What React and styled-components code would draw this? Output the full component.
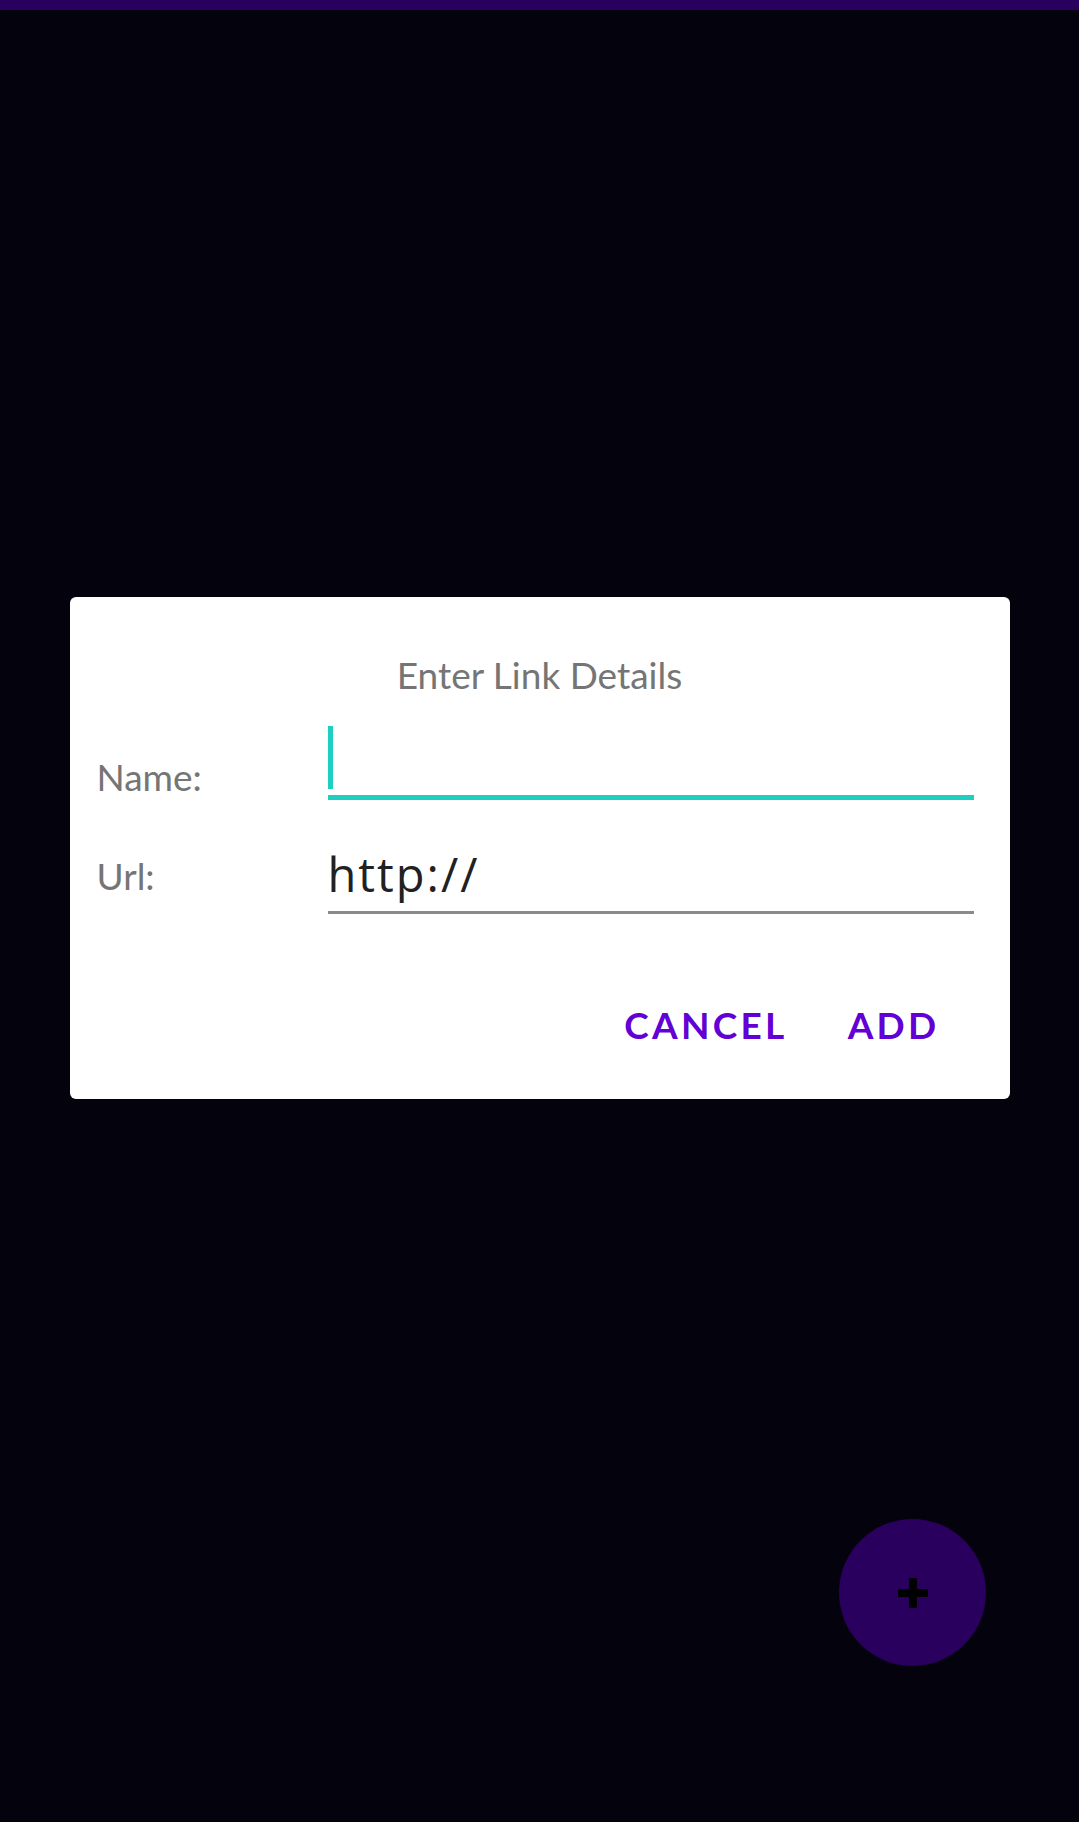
import React from 'react';
import styled, { createGlobalStyle } from 'styled-components';

const GlobalStyle = createGlobalStyle`
  html, body {
    margin: 0;
    padding: 0;
    background-color: #04020d;
  }
  * {
    box-sizing: border-box;
  }
`;

const Page = styled.div`
  position: relative;
  width: 1079px;
  height: 1822px;
  background-color: #04020d;
  overflow: hidden;
  font-family: Lato, 'Open Sans', sans-serif;
`;

const StatusBar = styled.div`
  height: 10px;
  background-color: #2a005e;
`;

const Overlay = styled.div`
  position: absolute;
  inset: 0;
  display: flex;
  justify-content: center;
  align-items: flex-start;
  padding-top: 597px;
`;

const Dialog = styled.div`
  width: 940px;
  padding: 56px 36px 0 27px;
  display: flex;
  flex-direction: column;
  background-color: #ffffff;
  border-radius: 6px;
`;

const Title = styled.div`
  margin-left: 9px;
  text-align: center;
  font-size: 37px;
  line-height: 44px;
  color: #757575;
`;

const Row = styled.div`
  display: grid;
  grid-template-columns: 231px 1fr;
  align-items: end;
  margin-top: ${({ $top }) => $top}px;
`;

const Label = styled.div`
  margin-bottom: ${({ $bottom }) => $bottom}px;
  font-size: 37px;
  line-height: 44px;
  color: #757575;
`;

const Field = styled.div`
  height: ${({ $height }) => $height}px;
  display: flex;
  align-items: flex-start;
  padding-bottom: 5px;
  border-bottom: ${({ $focused }) =>
    $focused ? '5px solid #1ccfc0' : '3px solid #8a8a8a'};
  font-family: 'Open Sans', sans-serif;
  font-size: 47px;
  line-height: 64px;
  letter-spacing: 2px;
  color: #212121;
`;

const Caret = styled.span`
  width: 5px;
  height: 63px;
  background-color: #1ccfc0;
`;

const Actions = styled.div`
  display: flex;
  justify-content: flex-end;
  gap: 18px;
  margin-top: 77px;
  padding: 0 13px 40px 0;
`;

const TextButton = styled.button`
  padding: 12px 21px;
  border: none;
  background: none;
  font-family: Lato, sans-serif;
  font-weight: 700;
  font-size: 37px;
  line-height: 44px;
  letter-spacing: 3.3px;
  color: #6200d6;
  cursor: pointer;
`;

const Fab = styled.button`
  position: absolute;
  right: 93px;
  bottom: 156px;
  width: 147px;
  height: 147px;
  display: flex;
  align-items: center;
  justify-content: center;
  border: none;
  border-radius: 50%;
  background-color: #2a005e;
  cursor: pointer;
`;

function App() {
  return (
    <Page>
      <GlobalStyle />
      <StatusBar />
      <Overlay>
        <Dialog>
          <Title>Enter Link Details</Title>
          <Row $top={29}>
            <Label $bottom={1}>Name:</Label>
            <Field $height={74} $focused>
              <Caret />
            </Field>
          </Row>
          <Row $top={42}>
            <Label $bottom={16}>Url:</Label>
            <Field $height={72}>http://</Field>
          </Row>
          <Actions>
            <TextButton>CANCEL</TextButton>
            <TextButton>ADD</TextButton>
          </Actions>
        </Dialog>
      </Overlay>
      <Fab>
        <svg width="36" height="36" viewBox="0 0 36 36">
          <path d="M18 3v30M3 18h30" stroke="#000" strokeWidth="8" />
        </svg>
      </Fab>
    </Page>
  );
}

export default App;
